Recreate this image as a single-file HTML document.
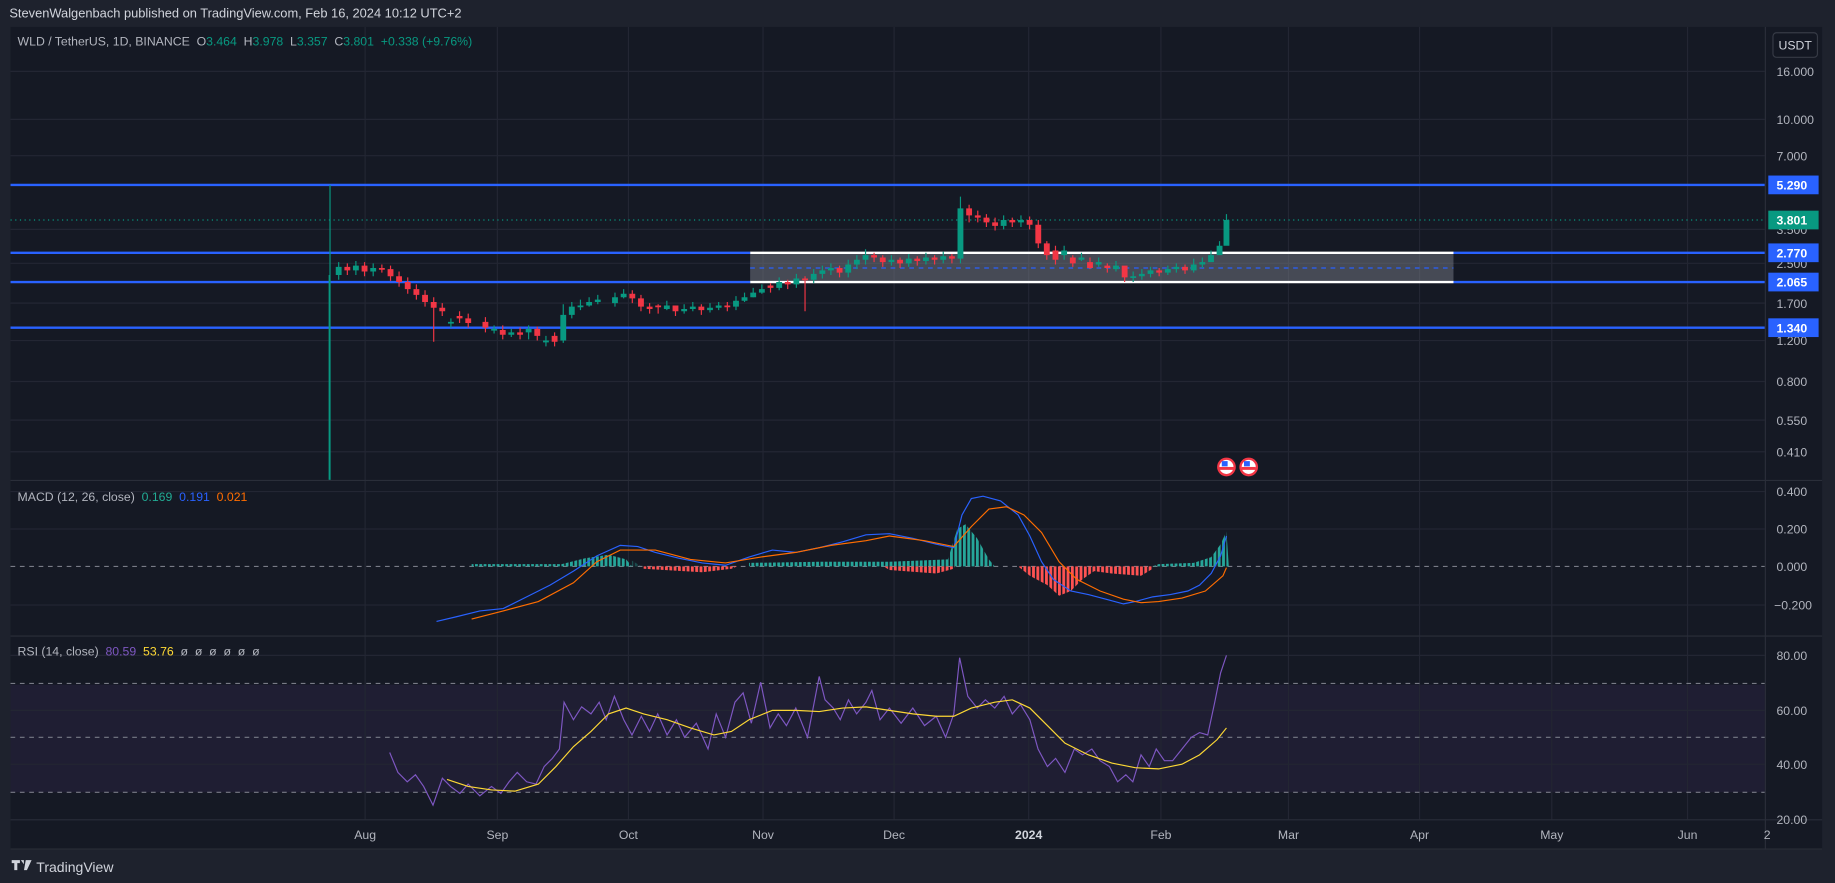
<!DOCTYPE html>
<html><head><meta charset="utf-8"><style>
html,body{margin:0;padding:0;background:#1e222d;width:1835px;height:883px;overflow:hidden}
svg{display:block}
text{font-family:"Liberation Sans",sans-serif}
</style></head><body>
<svg width="1835" height="883" viewBox="0 0 1568 754.5" preserveAspectRatio="none">
<defs>
<pattern id="pg" patternUnits="userSpaceOnUse" width="3.69" height="10"><rect x="0" y="0" width="2.4" height="10" fill="#26a69a"/></pattern>
<pattern id="pr" patternUnits="userSpaceOnUse" width="3.69" height="10"><rect x="0" y="0" width="2.4" height="10" fill="#ff5252"/></pattern>
</defs>
<rect x="0" y="0" width="1568" height="755" fill="#1e222d"/>
<rect x="9" y="23" width="1548" height="703" fill="#151924"/>
<rect x="9" y="585" width="1499" height="92" fill="#1f1e33"/>
<g stroke="#232633" stroke-width="1">
<path d="M312 23V700M425 23V700M537 23V700M652 23V700M764 23V700M879 23V700M992 23V700M1101 23V700M1213 23V700M1326 23V700M1442 23V700"/>
<path d="M9 61H1508M9 102H1508M9 133H1508M9 196H1508M9 225H1508M9 259H1508M9 291H1508M9 326H1508M9 359H1508M9 386H1508M9 420H1508M9 452H1508M9 517H1508M9 560H1508M9 607H1508M9 653H1508"/>
</g>
<!-- box & lines -->
<rect x="641" y="216" width="601" height="25" fill="#787b86" fill-opacity="0.5"/>
<path d="M641 216H1242M641 241H1242" stroke="#fff" stroke-width="2"/>
<path d="M641 229H1242" stroke="#2962ff" stroke-dasharray="4 4"/>
<path d="M9 158H1508M9 216H641M1242 216H1508M9 241H641M1242 241H1508M9 280H1508" stroke="#2962ff" stroke-width="2"/>
<path d="M9 188H1508" stroke="#089981" stroke-dasharray="1 3"/>
<!-- candles -->
<path stroke="#089981" stroke-width="1" d="M282 158V410M289.4 224V239M304.1 223V235M318.9 225V236M385.3 272V280M422.2 278V285M436.9 281V288M451.7 278V290M466.5 287V296M481.3 260V293M488.6 258V272M496 256V265M503.4 254V262M510.8 252V260M525.5 250V262M532.9 247V255M569.8 257V265M584.6 260V268M592 258V266M606.7 259V267M614.1 258V265M628.9 253V265M636.2 250V258M643.6 246V254M651 243V251M665.8 237V248M680.5 234V246M695.3 230V242M702.7 227V238M710 225V235M724.8 222V237M732.2 218V230M739.6 213V226M761.7 218V227M776.5 217V228M791.2 216V226M806 215V225M820.7 168V225M857.6 184V196M872.4 184V194M909.3 210V222M924.1 216V223M938.8 220V228M953.6 223V232M968.3 232V241M975.7 230V239M983.1 228V237M997.9 227V235M1005.2 225V233M1020 221V233M1027.4 220V229M1034.8 214V222M1042.1 206V214M1048 183V203"/>
<path stroke="#f23645" stroke-width="1" d="M296.8 225V235M311.5 224V236M326.3 226V233M333.7 227V240M341 232V245M348.4 237V251M355.8 243V256M363.2 248V262M370.6 254V292M377.9 259V270M392.7 266V276M400.1 268V280M414.8 271V284M429.6 278V290M444.4 280V290M459.1 279V291M473.9 284V296M540.3 248V259M547.7 252V266M555.1 259V268M562.4 260V268M577.2 262V270M599.3 260V269M621.5 258V266M658.4 242V250M673.1 239V247M687.9 236V266M717.4 227V237M746.9 216V224M754.3 218V228M769.1 220V229M783.8 219V227M798.6 218V226M813.4 217V225M828.1 175V190M835.5 180V190M842.9 183V194M850.3 186V197M865 186V194M879.8 185V196M887.2 188V212M894.5 206V222M901.9 210V226M916.7 218V228M931.4 220V230M946.2 225V233M961 229V241M990.5 229V236M1012.6 226V234"/>
<g fill="#089981">
<rect x="280.8" y="235" width="1.6" height="175"/>
<path d="M286.9 228h5v7h-5zM301.6 227h5v4h-5zM316.4 229h5v3h-5zM382.8 275h5v1.5h-5zM419.7 281h5v1.5h-5zM434.4 284h5v2h-5zM449.2 281h5v3h-5zM464 291h5v1.5h-5zM478.8 269h5v22h-5zM486.1 262h5v7h-5zM493.5 261h5v1.5h-5zM500.9 258h5v3h-5zM508.3 256h5v2h-5zM523 254h5v5h-5zM530.4 251h5v3h-5zM567.3 261h5v3h-5zM582.1 264h5v2h-5zM589.5 262h5v2h-5zM604.2 263h5v2h-5zM611.6 261h5v2h-5zM626.4 257h5v5h-5zM633.7 254h5v3h-5zM641.1 250h5v4h-5zM648.5 247h5v3h-5zM663.3 241h5v5h-5zM678 238h5v5h-5zM692.8 234h5v5h-5zM700.2 231h5v3h-5zM707.5 229h5v2h-5zM722.3 226h5v7h-5zM729.7 222h5v4h-5zM737.1 218h5v4h-5zM759.2 222h5v2h-5zM774 221h5v4h-5zM788.7 220h5v3h-5zM803.5 219h5v3h-5zM818.2 178h5v43h-5zM855.1 188h5v5h-5zM869.9 188h5v2h-5zM906.8 214h5v4h-5zM921.6 220h5v2h-5zM936.3 224h5v2h-5zM951.1 227h5v3h-5zM965.8 236h5v1.5h-5zM973.2 234h5v2h-5zM980.6 231h5v3h-5zM995.4 230h5v3h-5zM1002.7 228h5v2h-5zM1017.5 226h5v5h-5zM1024.9 224h5v2h-5zM1032.3 218h5v6h-5zM1039.6 210h5v8h-5zM1045.5 188h5v22h-5z"/>
</g>
<g fill="#f23645">
<path d="M294.3 228h5v3h-5zM309 227h5v5h-5zM323.8 229h5v1.5h-5zM331.2 230h5v6h-5zM338.5 236h5v5h-5zM345.9 241h5v6h-5zM353.3 247h5v5h-5zM360.7 252h5v6h-5zM368.1 258h5v5h-5zM375.4 263h5v3h-5zM390.2 270h5v2h-5zM397.6 272h5v4h-5zM412.3 275h5v5h-5zM427.1 282h5v4h-5zM441.9 284h5v2h-5zM456.6 281h5v6h-5zM471.4 287h5v5h-5zM537.8 251h5v4h-5zM545.2 255h5v7h-5zM552.6 262h5v2h-5zM559.9 261h5v1.5h-5zM574.7 261h5v5h-5zM596.8 262h5v3h-5zM619 261h5v1.5h-5zM655.9 244h5v2h-5zM670.6 241h5v2h-5zM685.4 238h5v1.5h-5zM714.9 229h5v4h-5zM744.4 218h5v2h-5zM751.8 220h5v4h-5zM766.6 222h5v3h-5zM781.3 221h5v2h-5zM796.1 220h5v2h-5zM810.9 219h5v2h-5zM825.6 178h5v6h-5zM833 184h5v2h-5zM840.4 186h5v4h-5zM847.8 190h5v3h-5zM862.5 188h5v2h-5zM877.3 188h5v4h-5zM884.7 192h5v16h-5zM892 208h5v10h-5zM899.4 214h5v8h-5zM914.2 220h5v5h-5zM928.9 224h5v5h-5zM943.7 227h5v2h-5zM958.5 227h5v10h-5zM988 231h5v2h-5zM1010.1 228h5v3h-5z"/>
</g>
<!-- MACD -->
<path d="M9 484H1508" stroke="#787b86" stroke-dasharray="4 4"/>
<path fill="url(#pg)" d="M403 484L403 482L480 482L500 477L520 474L535 478L540 484ZM640 484L640 481L700 480L760 480L810 478L818 452L825 448L835 460L845 478L850 484ZM985 484L990 482L1020 481L1035 476L1043 465L1048 454L1050 484Z"/>
<path fill="url(#pg)" fill-opacity="0.35" d="M540 484L540 479L548 484Z"/>
<path fill="url(#pr)" d="M550 484L550 486L600 489L625 486L630 484ZM755 484L760 487L800 490L815 486L816 484ZM870 484L880 492L895 500L905 509L915 505L925 495L935 488L950 490L975 492L985 486L985 484Z"/>
<path fill="none" stroke="#2962ff" stroke-width="1" d="M373 531L390 527L410 522L430 520L450 510L470 500L490 488L510 475L530 466L545 467L560 472L580 477L600 481L620 483L640 476L660 470L680 472L700 468L720 463L740 457L760 456L780 460L800 465L815 468L822 440L830 426L840 424L855 428L870 440L880 458L890 480L900 495L915 505L930 508L945 512L960 516L970 514L985 510L1000 508L1015 505L1025 500L1035 490L1043 475L1048 458"/>
<path fill="none" stroke="#ff6d00" stroke-width="1" d="M403 529L430 522L460 514L490 498L510 480L530 470L560 470L590 478L620 481L650 476L680 472L710 466L740 462L760 458L790 462L815 467L830 450L845 435L860 433L875 440L890 455L905 480L920 495L940 505L960 512L975 515L990 514L1010 511L1030 505L1045 492L1048 485"/>
<!-- RSI -->
<path d="M9 584H1508M9 630H1508M9 677H1508" stroke="#787b86" stroke-dasharray="4 4"/>
<path fill="none" stroke="#7e57c2" stroke-width="1" d="M333 643L340 660L348 668L355 662L362 672L370 688L378 665L385 672L393 678L400 670L410 680L420 672L428 678L435 668L442 660L450 668L458 670L465 655L472 648L478 640L482 600L490 615L497 604L505 610L512 600L518 615L525 595L533 615L540 628L548 612L555 625L562 610L570 628L578 615L585 630L595 618L605 640L612 610L620 630L628 600L635 592L642 618L650 583L658 622L665 610L672 620L680 605L690 630L700 578L705 598L712 605L718 615L725 598L732 610L740 600L745 590L752 615L760 605L770 618L780 605L790 620L800 612L808 630L815 610L820 562L827 595L835 605L842 598L850 605L858 595L865 610L872 602L880 615L887 640L895 655L902 648L910 660L918 640L925 645L933 640L940 650L948 655L955 668L962 662L968 668L975 645L982 655L988 640L995 650L1002 650L1010 640L1018 630L1025 626L1032 628L1038 600L1043 575L1048 560"/>
<path fill="none" stroke="#fdd835" stroke-width="1" d="M382 666L400 672L420 675L440 676L460 670L475 655L490 638L505 625L520 610L535 605L550 610L570 615L590 622L610 628L625 625L640 615L660 607L680 607L700 608L720 605L740 604L760 607L780 610L800 612L815 612L830 605L850 600L865 598L880 605L895 620L910 635L930 645L950 652L970 656L990 657L1010 653L1025 645L1040 632L1048 622"/>
<!-- separators -->
<line x1="9" y1="410.5" x2="1557" y2="410.5" stroke="#2a2e39"/>
<line x1="9" y1="543.5" x2="1557" y2="543.5" stroke="#2a2e39"/>
<line x1="9" y1="700.5" x2="1557" y2="700.5" stroke="#2a2e39"/>
<line x1="1508.5" y1="23" x2="1508.5" y2="726" stroke="#2a2e39"/>
<line x1="9" y1="725.5" x2="1557" y2="725.5" stroke="#2a2e39"/>
<!-- header -->
<text x="8" y="15" font-size="11" fill="#d1d4dc">StevenWalgenbach published on TradingView.com, Feb 16, 2024 10:12 UTC+2</text>
<text x="15" y="39" font-size="10.5" fill="#b2b5be" xml:space="preserve">WLD / TetherUS, 1D, BINANCE  O<tspan fill="#089981">3.464</tspan>  H<tspan fill="#089981">3.978</tspan>  L<tspan fill="#089981">3.357</tspan>  C<tspan fill="#089981">3.801</tspan>  <tspan fill="#089981">+0.338 (+9.76%)</tspan></text>
<text x="15" y="428" font-size="10.5" fill="#b2b5be" xml:space="preserve">MACD (12, 26, close)  <tspan fill="#22ab94">0.169</tspan>  <tspan fill="#2962ff">0.191</tspan>  <tspan fill="#ff6d00">0.021</tspan></text>
<text x="15" y="560" font-size="10.5" fill="#b2b5be" xml:space="preserve">RSI (14, close)  <tspan fill="#7e57c2">80.59</tspan>  <tspan fill="#fdd835">53.76</tspan>  ø  ø  ø  ø  ø  ø</text>
<!-- price axis -->
<rect x="1515" y="28" width="38" height="21" rx="3" fill="#131722" stroke="#363a45"/>
<text x="1534" y="42.5" font-size="10.5" fill="#d1d4dc" text-anchor="middle">USDT</text>
<g font-size="10.5" fill="#b2b5be">
<text x="1518" y="65">16.000</text><text x="1518" y="106">10.000</text><text x="1518" y="137">7.000</text>
<text x="1518" y="200">3.500</text><text x="1518" y="229">2.500</text><text x="1518" y="263">1.700</text>
<text x="1518" y="295">1.200</text><text x="1518" y="330">0.800</text><text x="1518" y="363">0.550</text><text x="1518" y="390">0.410</text>
<text x="1518" y="424">0.400</text><text x="1518" y="456">0.200</text><text x="1518" y="488">0.000</text><text x="1516" y="521">−0.200</text>
<text x="1518" y="564">80.00</text><text x="1518" y="611">60.00</text><text x="1518" y="657">40.00</text><text x="1518" y="704">20.00</text>
</g>
<g font-size="10.5" font-weight="bold" fill="#fff">
<rect x="1511" y="150" width="43" height="16" fill="#2962ff"/><text x="1518" y="162">5.290</text>
<rect x="1511" y="180" width="43" height="16" fill="#089981"/><text x="1518" y="192">3.801</text>
<rect x="1511" y="208" width="43" height="16" fill="#2962ff"/><text x="1518" y="220">2.770</text>
<rect x="1511" y="233" width="43" height="16" fill="#2962ff"/><text x="1518" y="245">2.065</text>
<rect x="1511" y="272" width="43" height="16" fill="#2962ff"/><text x="1518" y="284">1.340</text>
</g>
<!-- time axis -->
<g font-size="10.5" fill="#b2b5be" text-anchor="middle">
<text x="312" y="717">Aug</text><text x="425" y="717">Sep</text><text x="537" y="717">Oct</text><text x="652" y="717">Nov</text>
<text x="764" y="717">Dec</text><text x="879" y="717" font-weight="bold" fill="#d1d4dc">2024</text><text x="992" y="717">Feb</text>
<text x="1101" y="717">Mar</text><text x="1213" y="717">Apr</text><text x="1326" y="717">May</text><text x="1442" y="717">Jun</text><text x="1510" y="717">2</text>
</g>
<!-- flags -->
<g>
<circle cx="1048" cy="399" r="8" fill="#f23645"/><circle cx="1048" cy="399" r="6" fill="#fff"/><path d="M1042 399h12v2.5h-12z" fill="#f23645"/><rect x="1044" y="394" width="5" height="4.5" fill="#2962ff"/>
<circle cx="1067" cy="399" r="8" fill="#f23645"/><circle cx="1067" cy="399" r="6" fill="#fff"/><path d="M1061 399h12v2.5h-12z" fill="#f23645"/><rect x="1063" y="394" width="5" height="4.5" fill="#2962ff"/>
</g>
<!-- footer -->
<path d="M10 735h7v2.5h-2.2v6h-2.6v-6h-2.2zM17.8 735h2.6v3.5zM22 735h5l-4 8.5h-2.5z" fill="#d1d4dc"/>
<text x="31" y="745" font-size="12" fill="#d1d4dc">TradingView</text>
</svg>
</body></html>
